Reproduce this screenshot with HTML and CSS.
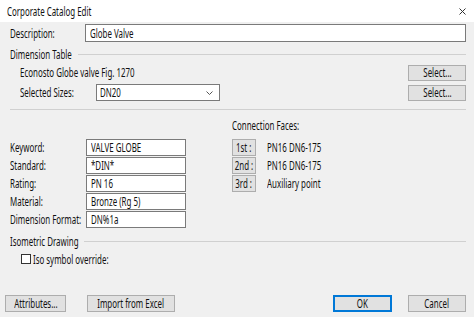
FILE: index.html
```html
<!DOCTYPE html>
<html lang="en">
<head>
  <meta charset="UTF-8" />
  <meta name="viewport" content="width=device-width, initial-scale=1.0"/>
  <title>Corporate Catalog Edit</title>
  <link rel="stylesheet" href="styles.css">
</head>
<body>
  <div class="dialog">
    <div class="titlebar">
      <span class="t">Corporate Catalog Edit</span>
      <svg class="close" width="7" height="7" viewBox="0 0 7 7">
        <path d="M0.5 0.5 L6.5 6.5 M6.5 0.5 L0.5 6.5" stroke="#333" stroke-width="1" fill="none"/>
      </svg>
    </div>

    <div class="content">
      <div class="desc-row">
        <label class="label"><span class="t">Description:</span></label>
        <div class="textbox"><span class="t">Globe Valve</span></div>
      </div>

      <div class="group-head">
        <span class="group-title dim"><span class="t">Dimension Table</span></span>
        <div class="rule"></div>
      </div>

      <div class="table-row first">
        <span class="indent"><span class="t">Econosto Globe valve Fig. 1270</span></span>
        <button class="btn select-btn"><span class="t">Select...</span></button>
      </div>
      <div class="table-row">
        <div class="sizes indent">
          <label class="sizes-label"><span class="t">Selected Sizes:</span></label>
          <div class="combo">
            <span class="t">DN20</span>
            <svg width="7" height="4" viewBox="0 0 7 4">
              <path d="M0.5 0.5 L3.5 3.5 L6.5 0.5" stroke="#555" stroke-width="1" fill="none"/>
            </svg>
          </div>
        </div>
        <button class="btn select-btn"><span class="t">Select...</span></button>
      </div>

      <div class="separator"></div>

      <div class="props">
        <div class="fields">
          <div class="field"><label class="label"><span class="t">Keyword:</span></label><div class="textbox small"><span class="t">VALVE GLOBE</span></div></div>
          <div class="field"><label class="label"><span class="t">Standard:</span></label><div class="textbox small"><span class="t">*DIN*</span></div></div>
          <div class="field"><label class="label"><span class="t">Rating:</span></label><div class="textbox small"><span class="t">PN 16</span></div></div>
          <div class="field"><label class="label"><span class="t">Material:</span></label><div class="textbox small"><span class="t">Bronze (Rg 5)</span></div></div>
          <div class="field"><label class="label"><span class="t">Dimension Format:</span></label><div class="textbox small"><span class="t">DN%1a</span></div></div>
        </div>
        <div class="faces">
          <div class="faces-head"><span class="t">Connection Faces:</span></div>
          <div class="face"><button class="btn face-btn"><span class="t">1st :</span></button><span class="face-name"><span class="t">PN16 DN6-175</span></span></div>
          <div class="face"><button class="btn face-btn"><span class="t">2nd :</span></button><span class="face-name"><span class="t">PN16 DN6-175</span></span></div>
          <div class="face"><button class="btn face-btn"><span class="t">3rd :</span></button><span class="face-name"><span class="t">Auxiliary point</span></span></div>
        </div>
      </div>

      <div class="group-head iso">
        <span class="group-title iso-title"><span class="t">Isometric Drawing</span></span>
        <div class="rule"></div>
      </div>

      <div class="check-row">
        <span class="checkbox"></span>
        <span class="check-label"><span class="t">Iso symbol override:</span></span>
      </div>
    </div>

    <div class="footer">
      <div class="footer-left">
        <button class="btn attr-btn"><span class="t">Attributes...</span></button>
        <button class="btn excel-btn"><span class="t">Import from Excel</span></button>
      </div>
      <div class="footer-right">
        <button class="btn ok-btn"><span class="t">OK</span></button>
        <button class="btn cancel-btn"><span class="t">Cancel</span></button>
      </div>
    </div>
  </div>
</body>
</html>
```

FILE: styles.css
```css
body {
  margin: 0;
  font-family: "Noto Sans", "Open Sans", sans-serif;
  font-size: 12px;
  color: #111;
  background-color: #f0f0f0;
}

/* the dialog text is drawn narrow, like the captured window */
.t {
  display: inline-block;
  white-space: nowrap;
  transform: scaleX(0.66);
  transform-origin: left center;
}

.dialog {
  height: 317px;
  display: flex;
  flex-direction: column;
  overflow: hidden;
}

.titlebar {
  height: 22px;
  background-color: #fff;
  display: flex;
  align-items: center;
  justify-content: space-between;
  padding: 0 8px 0 7px;
  overflow: hidden;
}

.titlebar .t {
  width: 90px;
}

.content {
  padding: 2px 8px 0 10px;
}

.label {
  display: block;
  white-space: nowrap;
  overflow: visible;
  width: 0;
}

.textbox {
  background-color: #fff;
  border: 1px solid #7a7a7a;
  box-sizing: border-box;
  padding: 0 4px;
  display: flex;
  align-items: center;
  overflow: hidden;
}

.desc-row {
  display: grid;
  grid-template-columns: 75px 1fr;
  align-items: center;
}

.desc-row .textbox {
  height: 18px;
}

.group-head {
  display: flex;
  align-items: center;
  height: 16px;
  margin-top: 4px;
}

.group-title {
  display: block;
  white-space: nowrap;
}

.group-title.dim {
  width: 68px;
}

.group-title.iso-title {
  width: 74px;
}

.rule {
  flex: 1;
  height: 1px;
  background-color: #d0d0d0;
}

.table-row {
  display: flex;
  align-items: center;
  justify-content: space-between;
  margin-top: 3px;
}

.table-row.first {
  margin-top: 2px;
}

.indent {
  margin-left: 10px;
  display: block;
  width: 200px;
}

.btn {
  font-family: inherit;
  font-size: 12px;
  color: #111;
  background-color: #e1e1e1;
  border: 1px solid #adadad;
  box-sizing: border-box;
  padding: 0;
  margin: 0;
  display: flex;
  align-items: center;
  justify-content: center;
  overflow: visible;
}

.btn .t {
  transform-origin: center center;
}

.select-btn {
  width: 58px;
  height: 16px;
}

.sizes {
  display: flex;
  align-items: center;
}

.sizes-label {
  width: 76px;
  white-space: nowrap;
}

.combo {
  width: 126px;
  height: 17px;
  box-sizing: border-box;
  background-color: #fff;
  border: 1px solid #7a7a7a;
  display: flex;
  align-items: center;
  justify-content: space-between;
  padding: 0 6px 0 3px;
  overflow: hidden;
}

.combo .t {
  width: 30px;
}

.separator {
  height: 1px;
  background-color: #d0d0d0;
  margin-top: 8px;
}

.props {
  display: flex;
  margin-top: 8px;
}

.fields {
  width: 222px;
  padding-top: 21px;
}

.field {
  display: grid;
  grid-template-columns: 76px 100px;
  align-items: center;
  margin-bottom: 1px;
}

.textbox.small {
  height: 17px;
}

.faces-head {
  height: 16px;
  line-height: 16px;
  margin-bottom: 5px;
  white-space: nowrap;
}

.face {
  display: flex;
  align-items: center;
  height: 17px;
  margin-bottom: 1px;
}

.face-name {
  margin-left: 11px;
  white-space: nowrap;
}

.face-btn {
  width: 24px;
  height: 17px;
}

.check-row {
  display: flex;
  align-items: center;
  margin-top: 2px;
  margin-left: 11px;
  height: 16px;
}

.checkbox {
  width: 10px;
  height: 10px;
  box-sizing: border-box;
  border: 1px solid #333;
  background-color: #fff;
}

.check-label {
  margin-left: 2px;
  white-space: nowrap;
}

.footer {
  margin-top: auto;
  display: flex;
  justify-content: space-between;
  padding: 0 8px 5px 5px;
}

.footer-left,
.footer-right {
  display: flex;
}

.btn.attr-btn {
  width: 61px;
  height: 17px;
}

.btn.excel-btn {
  width: 88px;
  height: 17px;
  margin-left: 21px;
}

.btn.ok-btn {
  width: 59px;
  height: 17px;
  border: 2px solid #0078d7;
}

.btn.cancel-btn {
  width: 58px;
  height: 17px;
  margin-left: 16px;
}
```
